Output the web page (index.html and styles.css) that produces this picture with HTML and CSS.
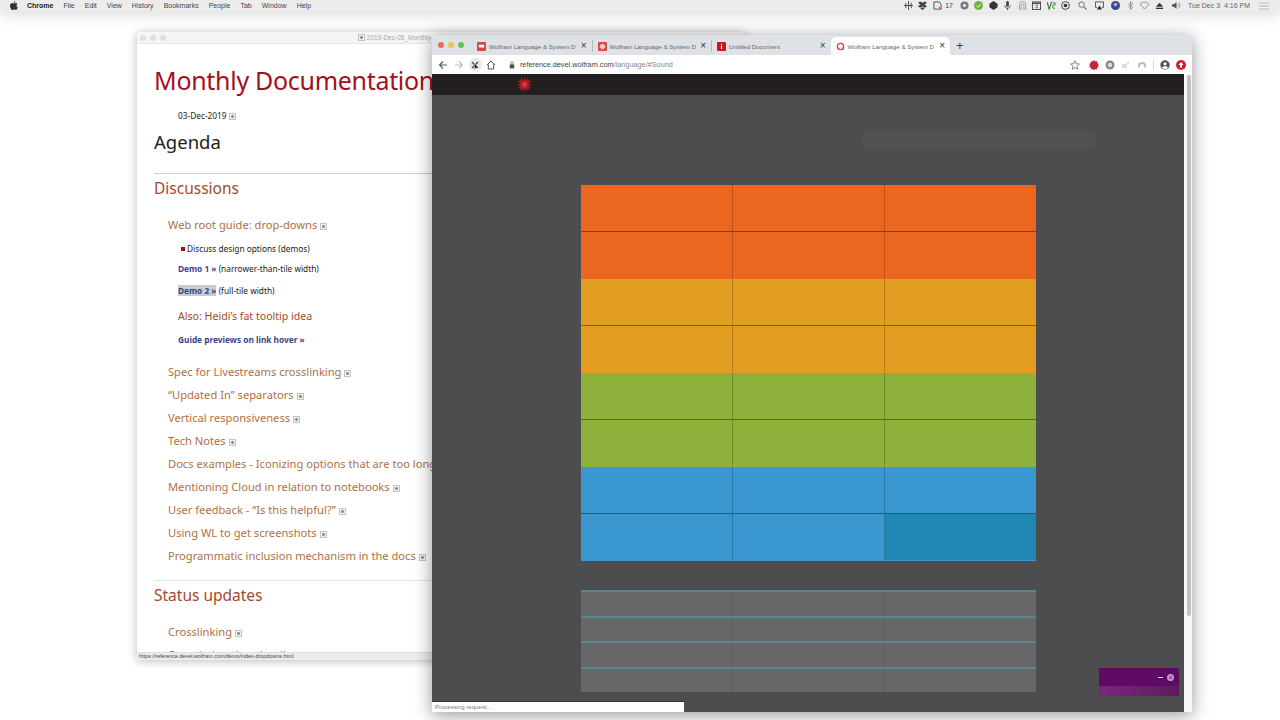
FILE: index.html
```html
<!DOCTYPE html>
<html lang="en">
<head>
    <meta charset="UTF-8">
    <title>Monthly Documentation - Wolfram Language</title>
    <link rel="stylesheet" href="styles.css">
</head>
<body>
    <!-- macOS menu bar -->
    <header class="menubar">
        <nav class="menu-left">
            <svg class="apple" width="8" height="9" viewBox="0 0 16 18"><path d="M11 0c.2 2-1.500 3.800-3.300 3.700C7.500 2 9.300.2 11 0zM8 5c1 0 2-.9 3.600-.9 1.300 0 2.600.7 3.400 1.800-3 1.700-2.500 5.800.6 7-.8 2-2.400 5-4.100 5-1.200 0-1.700-.8-3.200-.8s-2 .8-3.200.8C2.700 18 0 13.500 0 9.800 0 6.200 2.300 4.200 4.500 4.200 6 4.200 7.200 5 8 5z" fill="#333"/></svg>
            <strong class="app-name">Chrome</strong>
            <span>File</span><span>Edit</span><span>View</span><span>History</span><span>Bookmarks</span><span>People</span><span>Tab</span><span>Window</span><span>Help</span>
        </nav>
        <div class="menu-right">
            <svg class="tray" viewBox="0 0 10 10"><path d="M5 0v10M0 5h10M2 2v6M8 2v6M2 5h6" stroke="#444" stroke-width="1" fill="none"/></svg>
            <svg class="tray" viewBox="0 0 10 10"><path d="M0 2l2.500-1.500L5 2l2.500-1.500L10 2 7.500 4 10 6 7.500 7.500 5 6 2.500 7.500 0 6l2.500-2zM2.500 8.300L5 7l2.500 1.300L5 10z" fill="#444"/></svg>
            <svg class="tray" viewBox="0 0 10 10"><path d="M1 1h6l2 3v5H1z" stroke="#444" fill="none"/><path d="M6 6l3 3" stroke="#c33"/></svg>
            <span class="tray-count">17</span>
            <svg class="tray" viewBox="0 0 10 10"><circle cx="5" cy="5" r="4.500" fill="#777"/><circle cx="5" cy="5" r="2" fill="#ddd"/></svg>
            <svg class="tray" viewBox="0 0 10 10"><circle cx="5" cy="5" r="5" fill="#6cb33f"/><path d="M2.500 5l2 2 3-4" stroke="#fff" fill="none"/></svg>
            <svg class="tray" viewBox="0 0 10 10"><path d="M5 0l4.500 3v4L5 10 .5 7V3z" fill="#333"/></svg>
            <svg class="tray" viewBox="0 0 10 10"><rect x="3.500" y="0" width="3" height="6.500" rx="1.500" fill="#444"/><path d="M2 5c0 4 6 4 6 0M5 8v2" stroke="#444" fill="none"/></svg>
            <svg class="tray" viewBox="0 0 10 10"><path d="M1.500 10V4a3.500 3.500 0 0 1 7 0v6M3.500 10V4.500a1.500 1.500 0 0 1 3 0V10" stroke="#999" fill="none"/></svg>
            <svg class="tray" viewBox="0 0 10 10"><rect x=".5" y="1" width="9" height="8.500" fill="none" stroke="#444"/><path d="M.5 2.500h9" stroke="#444" stroke-width="1.500"/><path d="M3.500 4.500h3l-1 1.500 1 1.500h-3" fill="none" stroke="#444" stroke-width=".7"/></svg>
            <svg class="tray" viewBox="0 0 10 10"><path d="M0 1l2.500 8L5 1" fill="none" stroke="#3a8a3a" stroke-width="1.400"/><path d="M6 2h3v2.500H6.500V8H9" fill="none" stroke="#3a8a3a"/></svg>
            <svg class="tray" viewBox="0 0 10 10"><circle cx="5" cy="5" r="4.300" fill="none" stroke="#333"/><circle cx="5" cy="5" r="2" fill="#333"/></svg>
            <svg class="tray tray-gap" viewBox="0 0 10 10"><circle cx="4" cy="4" r="3" fill="none" stroke="#666"/><path d="M6.300 6.300L9.500 9.500" stroke="#666" stroke-width="1.200"/></svg>
            <svg class="tray tray-gap" viewBox="0 0 10 10"><path d="M.5 1h9v6h-2M2.500 7h-2V1" fill="none" stroke="#444"/><path d="M5 5l3 4.500H2z" fill="#333"/></svg>
            <svg class="tray tray-nudge" viewBox="0 0 10 10"><circle cx="5" cy="5" r="5" fill="#34488f"/><circle cx="5" cy="4" r="2" fill="#b8a8d8"/></svg>
            <svg class="tray" viewBox="0 0 10 10"><path d="M2.500 3l5 4-2.500 2.500v-9L7.500 3l-5 4" fill="none" stroke="#777" stroke-width=".8"/></svg>
            <svg class="tray" viewBox="0 0 10 10"><path d="M0 3.500C3 .5 7 .5 10 3.500L5 9z" fill="none" stroke="#777" stroke-width=".8"/></svg>
            <svg class="tray" viewBox="0 0 10 10"><path d="M5 2l4 4.500H1zM1 7.500h8V9H1z" fill="#333"/></svg>
            <svg class="tray tray-gap" viewBox="0 0 10 10"><path d="M0 3.500h2L5 1v8L2 6.500H0z" fill="#555"/><path d="M6.500 3.500q1 1.500 0 3M8 2q2 3 0 6" fill="none" stroke="#777" stroke-width=".7"/></svg>
            <span class="clock">Tue Dec 3&nbsp; 4:16 PM</span>
            <svg class="tray-list" viewBox="0 0 10 8"><path d="M0 1h10M0 4h10M0 7h10" stroke="#bbb"/></svg>
        </div>
    </header>

    <!-- notebook window behind -->
    <section class="window notebook">
        <div class="nb-titlebar">
            <div class="nb-lights"><i></i><i></i><i></i></div>
            <span class="nb-title"><b class="cell-mark"></b> 2019-Dec-05_Monthly-Documentation.nb</span>
        </div>
        <div class="nb-body">
            <h1>Monthly Documentation Meeting</h1>
            <p class="date">03-Dec-2019 <b class="cell-mark"></b></p>
            <h2>Agenda</h2>
            <hr class="rule-agenda">
            <h3>Discussions</h3>
            <p class="topic first">Web root guide: drop-downs <b class="cell-mark"></b></p>
            <p class="note bullet"><i class="red-square"></i>Discuss design options (demos)</p>
            <p class="note demo-1"><a>Demo 1 »</a> (narrower-than-tile width)</p>
            <p class="note demo-2"><a class="selected">Demo 2 »</a> (full-tile width)</p>
            <p class="also">Also: Heidi’s fat tooltip idea</p>
            <p class="note guide"><a>Guide previews on link hover »</a></p>
            <p class="topic spec">Spec for Livestreams crosslinking <b class="cell-mark"></b></p>
            <p class="topic">“Updated In” separators <b class="cell-mark"></b></p>
            <p class="topic">Vertical responsiveness <b class="cell-mark"></b></p>
            <p class="topic">Tech Notes <b class="cell-mark"></b></p>
            <p class="topic">Docs examples - Iconizing options that are too long for the table</p>
            <p class="topic">Mentioning Cloud in relation to notebooks <b class="cell-mark"></b></p>
            <p class="topic">User feedback - “Is this helpful?” <b class="cell-mark"></b></p>
            <p class="topic">Using WL to get screenshots <b class="cell-mark"></b></p>
            <p class="topic">Programmatic inclusion mechanism in the docs <b class="cell-mark"></b></p>
            <hr class="rule-status">
            <h3 class="status">Status updates</h3>
            <p class="topic crosslink">Crosslinking <b class="cell-mark"></b></p>
            <p class="topic">Completing thumbnail openers <b class="cell-mark"></b></p>
        </div>
        <div class="nb-status">https://reference.devel.wolfram.com/demo/index-dropdowns.html</div>
    </section>

    <!-- browser window in front -->
    <section class="window browser">
        <div class="tabstrip">
            <div class="lights"><i class="red"></i><i class="amber"></i><i class="green"></i></div>
            <div class="tab">
                <svg class="favicon" viewBox="0 0 10 10"><rect width="10" height="10" rx="1" fill="#d9443f"/><path d="M2 3h6v3H2z" fill="#fff"/></svg>
                <span>Wolfram Language &amp; System D</span><em>×</em>
            </div>
            <div class="tab divided">
                <svg class="favicon" viewBox="0 0 10 10"><rect width="10" height="10" rx="1" fill="#d9443f"/><path d="M5 1l1 2 2-.500-.500 2L9 5.500l-2 1L6.500 8.500 5 7.500 3.500 8.500 3 6.500l-2-1 1.500-1L2 2.500l2 .5z" fill="#f6c8c6"/></svg>
                <span>Wolfram Language &amp; System D</span><em>×</em>
            </div>
            <div class="tab divided">
                <svg class="favicon" viewBox="0 0 10 10"><rect width="10" height="10" rx="1" fill="#c8161d"/><path d="M5 2v1M5 4v4" stroke="#fff" stroke-width="1.300"/></svg>
                <span>Untitled Document</span><em>×</em>
            </div>
            <div class="tab active">
                <svg class="favicon" viewBox="0 0 10 10"><circle cx="5" cy="5" r="3.500" fill="none" stroke="#d9443f" stroke-width="1.500"/><path d="M6 6l3 3" stroke="#d9443f"/></svg>
                <span>Wolfram Language &amp; System D</span><em>×</em>
            </div>
            <span class="new-tab">+</span>
        </div>
        <div class="toolbar">
            <svg class="tool" viewBox="0 0 10 10"><path d="M9 5H1.500M5 1.500L1.500 5 5 8.500" fill="none" stroke="#555" stroke-width="1.100"/></svg>
            <svg class="tool" viewBox="0 0 10 10"><path d="M1 5h7.500M5 1.500L8.500 5 5 8.500" fill="none" stroke="#bbb" stroke-width="1.100"/></svg>
            <span class="tool-hover"><svg class="tool" viewBox="0 0 10 10"><path d="M2 2l6 6M8 2L2 8" fill="none" stroke="#444" stroke-width="1.200"/><path d="M4.500 3.500v6l1.500-1.500h2.500z" fill="#111" stroke="#fff" stroke-width=".4"/></svg></span>
            <svg class="tool" viewBox="0 0 10 10"><path d="M1 5l4-4 4 4M2.300 4.300V9h5.400V4.300" fill="none" stroke="#444" stroke-width=".9"/></svg>
            <div class="omnibox">
                <svg class="lock" viewBox="0 0 8 10"><rect x="1" y="4" width="6" height="5.500" rx=".8" fill="#555"/><path d="M2.300 4V2.800a1.700 1.700 0 0 1 3.400 0V4" fill="none" stroke="#555"/></svg>
                <span class="host">reference.devel.wolfram.com</span><span class="path">/language/#Sound</span>
            </div>
            <svg class="tool star" viewBox="0 0 10 10"><path d="M5 .8l1.300 2.900 3.100.3-2.300 2.100.7 3.100L5 7.600 2.200 9.200l.7-3.100L.6 4l3.100-.3z" fill="none" stroke="#666" stroke-width=".8"/></svg>
            <svg class="tool ext" viewBox="0 0 10 10"><path d="M5 0l1.200 1.600L8 1l.2 1.900L10 4 8.800 5.500 10 7l-1.800.6L8 9.500 6.200 9 5 10.500 3.800 9 2 9.500l-.2-1.900L0 7l1.200-1.500L0 4l1.800-1.100L2 1l1.800.6z" fill="#c0283a"/></svg>
            <svg class="tool ext" viewBox="0 0 10 10"><circle cx="5" cy="5" r="4.500" fill="#888"/><circle cx="5" cy="5" r="2.200" fill="#ddd"/></svg>
            <svg class="tool ext" viewBox="0 0 10 10"><path d="M1 4h5v4H1z" fill="#ddd"/><path d="M5 3l3-2v4z" fill="#ddd"/></svg>
            <svg class="tool ext" viewBox="0 0 10 10"><path d="M1 8V6a4 4 0 0 1 8 0v2L7 7V6a2 2 0 0 0-4 0v1z" fill="#bbb"/></svg>
            <i class="tool-sep"></i>
            <svg class="tool profile" viewBox="0 0 10 10"><circle cx="5" cy="5" r="4.700" fill="#555"/><circle cx="5" cy="3.800" r="1.600" fill="#fff"/><path d="M2 7.800c1-2 5-2 6 0a4 4 0 0 1-6 0z" fill="#fff"/></svg>
            <svg class="tool" viewBox="0 0 10 10"><circle cx="5" cy="5" r="5" fill="#cc2127"/><path d="M5 2l2.500 3H6v2.500H4V5H2.500z" fill="#fff"/></svg>
        </div>
        <div class="viewport">
            <div class="page">
                <div class="page-top">
                    <svg class="spikey" viewBox="0 0 16 16"><circle cx="8" cy="8" r="4.800" fill="#a81f26"/><g fill="none" stroke="#b3212a" stroke-width="1.100"><path d="M8 .5v15M.5 8h15M2.700 2.700l10.600 10.600M13.300 2.700L2.700 13.300M4.500 1.500l7 13M11.500 1.500l-7 13M1.500 4.500l13 7M14.500 4.500l-13 7"/></g><path d="M8 5l2.500 3L8 11 5.500 8z" fill="#d0434a"/></svg>
                </div>
                <div class="search-box"></div>
                <div class="tiles">
                    <div class="tile-row orange"><i></i><i></i><i></i></div>
                    <div class="tile-row orange"><i></i><i></i><i></i></div>
                    <div class="tile-row yellow"><i></i><i></i><i></i></div>
                    <div class="tile-row yellow"><i></i><i></i><i></i></div>
                    <div class="tile-row green"><i></i><i></i><i></i></div>
                    <div class="tile-row green"><i></i><i></i><i></i></div>
                    <div class="tile-row blue"><i></i><i></i><i></i></div>
                    <div class="tile-row blue"><i></i><i></i><i class="hovered"></i></div>
                </div>
                <div class="grey-tiles">
                    <div class="grey-row"><i></i><i></i><i></i></div>
                    <div class="grey-row"><i></i><i></i><i></i></div>
                    <div class="grey-row"><i></i><i></i><i></i></div>
                    <div class="grey-row"><i></i><i></i><i></i></div>
                </div>
                <div class="chat-widget">
                    <div class="chat-head"><span class="chat-min"></span><span class="chat-close">×</span></div>
                    <div class="chat-foot"></div>
                </div>
                <div class="processing">Processing request...</div>
            </div>
            <div class="scrollbar"><div class="thumb"></div></div>
        </div>
    </section>
</body>
</html>
```

FILE: styles.css
```css
:root {
    --doc-font: "Noto Sans", "Open Sans", sans-serif;
    --ui-font: "Liberation Sans", Arial, sans-serif;
    --brown: #b0703f;
    --rust: #a5492a;
    --navy: #3a4488;
}

html, body {
    margin: 0;
    height: 720px;
    overflow: hidden;
}

body {
    position: relative;
    background: #fff;
    font-family: var(--ui-font);
}

p, h1, h2, h3 {
    margin: 0;
    font-weight: 400;
    white-space: nowrap;
}

/* menu bar */
.menubar {
    height: 11px;
    background: #ececec;
    box-shadow: 0 2px 16px rgba(0, 0, 0, 0.2);
    display: flex;
    justify-content: space-between;
    align-items: center;
    font-size: 7px;
    color: #444;
    position: relative;
}

.menu-left {
    display: flex;
    align-items: center;
    gap: 10px;
    padding-left: 10px;
}

.app-name {
    color: #222;
    margin-left: -1px;
}

.menu-right {
    display: flex;
    align-items: center;
    gap: 5.500px;
    padding-right: 11px;
}

.tray {
    width: 9px;
    height: 9px;
}

.tray-gap {
    margin-left: 2.500px;
}

.tray-nudge {
    margin-left: 1.500px;
}

.tray-count {
    font-size: 7px;
    margin: 0 1px 0 -2px;
}

.clock {
    margin-left: 2px;
    font-size: 7px;
    color: #666;
    white-space: nowrap;
}

.tray-list {
    width: 10px;
    height: 8px;
    margin-left: 3.500px;
}

/* desktop windows */
.window {
    position: absolute;
    overflow: hidden;
}

.notebook {
    left: 137px;
    top: 32px;
    width: 608px;
    height: 628px;
    background: #fff;
    border-radius: 4px 4px 0 0;
    box-shadow: 0 1px 10px rgba(0, 0, 0, 0.28);
    display: flex;
    flex-direction: column;
}

.browser {
    left: 432px;
    top: 35px;
    width: 760px;
    height: 677px;
    background: #fff;
    border-radius: 4px 4px 0 0;
    box-shadow: 0 3px 18px rgba(0, 0, 0, 0.42);
    display: flex;
    flex-direction: column;
}

/* notebook */
.nb-titlebar {
    height: 11px;
    background: #f5f5f5;
    border-bottom: 1px solid #e6e6e6;
    display: flex;
    align-items: center;
    flex: none;
}

.nb-lights {
    display: flex;
    gap: 4px;
    padding-left: 3px;
}

.nb-lights i {
    width: 6px;
    height: 6px;
    border-radius: 50%;
    background: #e0e0e0;
}

.nb-title {
    margin-left: 192px;
    font-size: 6.500px;
    color: #aaa;
    white-space: nowrap;
}

.nb-body {
    flex: 1;
    overflow: hidden;
    padding-left: 17px;
    font-family: var(--doc-font);
}

.cell-mark {
    display: inline-block;
    box-sizing: border-box;
    width: 7px;
    height: 7px;
    border: 1px solid #c4c4c4;
    background: radial-gradient(circle, #8a8a8a 35%, #f0f0f0 45%);
    margin-left: 0;
    vertical-align: -1px;
}

h1 {
    font-size: 25px;
    line-height: 34px;
    color: #a3101c;
    margin-top: 19px;
    letter-spacing: -0.3px;
}

.date {
    font-size: 8.300px;
    line-height: 12px;
    color: #222;
    margin: 13px 0 0 24px;
}

h2 {
    font-size: 18.500px;
    line-height: 28px;
    color: #222;
    margin-top: 6px;
}

.rule-agenda {
    border: 0;
    border-top: 1px solid #ccc;
    margin: 17px 0 0 0;
}

h3 {
    font-size: 15.500px;
    line-height: 22px;
    color: var(--rust);
    margin-top: 3px;
}

.topic {
    font-size: 11.150px;
    line-height: 16px;
    color: var(--brown);
    margin: 7px 0 0 14px;
}

.topic.first {
    margin-top: 18px;
}

.topic.spec {
    margin-top: 18px;
}

.note {
    font-size: 8.300px;
    line-height: 12px;
    color: #222;
    margin-left: 24px;
}

.note a {
    color: var(--navy);
    font-weight: 700;
}

.bullet {
    margin: 10px 0 0 27px;
}

.red-square {
    display: inline-block;
    width: 4px;
    height: 4px;
    background: #a3101c;
    margin-right: 2px;
    vertical-align: 1px;
}

.demo-1 {
    margin-top: 8px;
}

.demo-2 {
    margin-top: 10px;
}

.selected {
    background: #c9cbd3;
}

.also {
    font-size: 10.600px;
    line-height: 16px;
    color: var(--rust);
    margin: 11px 0 0 24px;
}

.guide {
    margin-top: 10px;
}

.rule-status {
    border: 0;
    border-top: 1px solid #e2e2e2;
    margin: 16px 0 0 0;
}

h3.status {
    margin-top: 3px;
}

.topic.crosslink {
    margin-top: 18px;
}

.nb-status {
    flex: none;
    height: 7px;
    background: #ececec;
    border-top: 1px solid #ddd;
    font-size: 5.400px;
    line-height: 7px;
    color: #444;
    padding-left: 2px;
    white-space: nowrap;
}

/* browser chrome */
.tabstrip {
    height: 20px;
    background: #dee1e6;
    display: flex;
    align-items: flex-end;
    flex: none;
    font-size: 6.200px;
    color: #666;
}

.lights {
    display: flex;
    gap: 4px;
    width: 40px;
    padding: 0 0 7px 6px;
    box-sizing: border-box;
    align-self: flex-end;
}

.lights i {
    width: 6px;
    height: 6px;
    border-radius: 50%;
}

.lights .red { background: #ec6a5e; }
.lights .amber { background: #f4bf4f; }
.lights .green { background: #61c554; }

.tab {
    width: 119.500px;
    height: 18px;
    box-sizing: border-box;
    display: flex;
    align-items: center;
    gap: 3px;
    padding: 0 5px;
    white-space: nowrap;
}

.tab.divided {
    border-left: 1px solid #b5b8bd;
    height: 12px;
    margin-bottom: 3px;
}

.tab.active {
    background: #fff;
    border-radius: 5px 5px 0 0;
}

.tab span {
    flex: 1;
}

.tab em {
    font-style: normal;
    font-size: 10px;
    line-height: 10px;
    color: #333;
}

.favicon {
    width: 9px;
    height: 9px;
    flex: none;
}

.new-tab {
    font-size: 13px;
    line-height: 18px;
    color: #444;
    margin-left: 6px;
}

.toolbar {
    height: 19px;
    background: #fff;
    display: flex;
    align-items: center;
    padding-left: 6px;
    flex: none;
}

.tool {
    width: 10px;
    height: 10px;
    flex: none;
    margin-right: 6px;
}

.tool-hover {
    width: 13px;
    height: 13px;
    margin: 0 4px 0 -1px;
    border-radius: 50%;
    background: #e8e8e8;
    display: flex;
    align-items: center;
    justify-content: center;
}

.tool-hover .tool {
    margin: 0;
}

.omnibox {
    width: 566px;
    display: flex;
    align-items: center;
    font-size: 7.300px;
    margin-left: 7px;
}

.lock {
    width: 6px;
    height: 8px;
    margin-right: 5px;
}

.host {
    color: #444;
}

.path {
    color: #888;
}

.star {
    margin-right: 9px;
}

.ext {
    margin-right: 6px;
}

.tool-sep {
    width: 1px;
    height: 11px;
    background: #ddd;
    margin: 0 6px 0 0;
}

/* wolfram page */
.viewport {
    flex: 1;
    display: flex;
    min-height: 0;
}

.page {
    flex: 1;
    position: relative;
    background: #4d4d4f;
    overflow: hidden;
}

.page-top {
    height: 21px;
    background: #231f20;
    display: flex;
    align-items: center;
    padding-left: 85px;
}

.spikey {
    width: 15px;
    height: 15px;
}

.search-box {
    width: 232px;
    height: 16px;
    margin: 37px 0 0 431px;
    box-sizing: border-box;
    background: #515153;
    border: 1px solid #555557;
}

.tiles {
    width: 455px;
    margin: 37px 0 0 149px;
}

.tile-row {
    display: grid;
    grid-template-columns: 152px 152px 151px;
    height: 47px;
    box-sizing: border-box;
    border-bottom: 1px solid rgba(0, 0, 0, 0.4);
}

.tile-row:nth-child(even) {
    border-bottom-color: transparent;
}

.tile-row i {
    border-right: 1px solid rgba(0, 0, 0, 0.2);
}

.tile-row i:last-child {
    border-right: 0;
}

.orange { background: #eb6620; }
.yellow { background: #e39e21; }
.green { background: #8db13a; }
.blue { background: #3a97cf; }

.tile-row i.hovered {
    background: #1f86b5;
}

.grey-tiles {
    width: 455px;
    margin: 29px 0 0 149px;
}

.grey-row {
    display: grid;
    grid-template-columns: 152px 152px 151px;
    height: 25.500px;
    box-sizing: border-box;
    background: #676769;
    border-top: 2px solid #55898c;
}

.grey-row i {
    border-right: 1px solid #5d5d5f;
}

.grey-row i:last-child {
    border-right: 0;
}

.chat-widget {
    position: absolute;
    left: 667px;
    top: 594px;
    width: 80px;
    height: 28px;
    display: flex;
    flex-direction: column;
}

.chat-head {
    height: 18px;
    background: #5f0a64;
    display: flex;
    align-items: center;
    justify-content: flex-end;
    gap: 4px;
    padding-right: 5px;
}

.chat-foot {
    flex: 1;
    background: linear-gradient(90deg, #762a7a, #5f1a62);
}

.chat-min {
    width: 5px;
    height: 1px;
    background: #e6d3e8;
}

.chat-close {
    width: 7px;
    height: 7px;
    border-radius: 50%;
    background: #c79bcb;
    color: #5f0a64;
    font-size: 7px;
    line-height: 7px;
    text-align: center;
}

.processing {
    position: absolute;
    left: 0;
    bottom: 0;
    width: 252px;
    height: 11px;
    background: #fff;
    border-top: 1px solid #333;
    box-sizing: border-box;
    font-size: 6px;
    line-height: 10px;
    color: #777;
    padding-left: 3px;
}

.scrollbar {
    width: 8px;
    background: #f7f7f7;
    flex: none;
    padding: 1px 1px 0 3px;
    box-sizing: border-box;
}

.thumb {
    height: 541px;
    background: #c1c1c1;
    border-radius: 2px;
}
```
